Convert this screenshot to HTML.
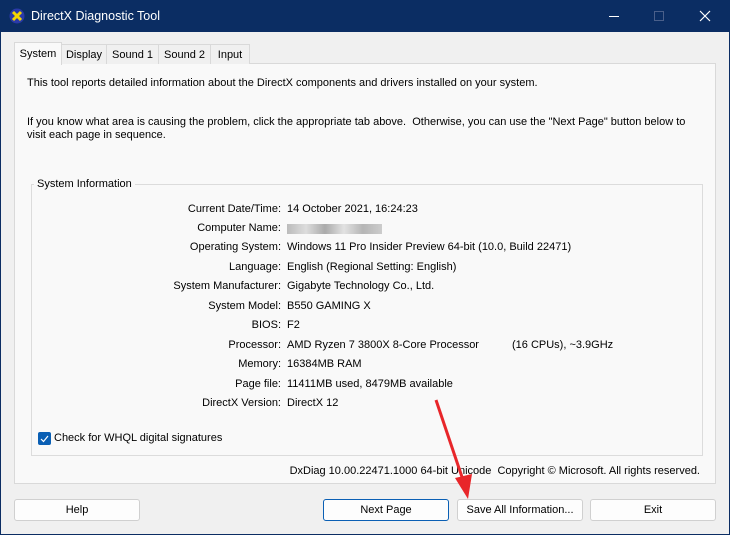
<!DOCTYPE html>
<html><head><style>
*{margin:0;padding:0;box-sizing:border-box}
body{width:730px;height:535px;background:#0b2d63;font-family:"Liberation Sans",sans-serif;font-size:11px;color:#000;position:relative;overflow:hidden}
.win{position:absolute;left:0;top:32px;width:730px;height:503px;background:#f0f0f0;border:1px solid #0b2d63;border-top:none}
.t{position:absolute;white-space:nowrap}
.title{color:#fff;font-size:12.5px;left:31px;top:9px}
.tab{position:absolute;top:44px;height:20px;border:1px solid #d9d9d9;border-bottom:none;background:#f0f0f0;padding:4px 0 0;text-align:center;font-size:11px}
.panel{position:absolute;left:14px;top:63px;width:702px;height:421px;background:#f9f9f9;border:1px solid #d9d9d9}
.grp{position:absolute;left:31px;top:184px;width:672px;height:272px;border:1px solid #dcdcdc}
.lab{position:absolute;right:449px;text-align:right;white-space:nowrap}
.val{position:absolute;left:287px;white-space:nowrap}
.btn{position:absolute;top:499px;height:22px;background:#fdfdfd;border:1px solid #d0d0d0;border-radius:3px;text-align:center;line-height:20px}
</style></head><body>
<svg style="position:absolute;left:9px;top:8px" width="16" height="16"><circle cx="8" cy="8" r="7.5" fill="#2a3aa8"/><path d="M4 4L12 12M12 4L4 12" stroke="#f5d400" stroke-width="3"/></svg>
<div class="t title">DirectX Diagnostic Tool</div>
<div style="position:absolute;left:609px;top:16px;width:10px;height:1px;background:#fff"></div>
<div style="position:absolute;left:654px;top:11px;width:10px;height:10px;border:1px solid #4a5f8a"></div>
<svg style="position:absolute;left:699px;top:10px" width="12" height="12"><path d="M1 1L11 11M11 1L1 11" stroke="#fff" stroke-width="1.2"/></svg>
<div class="win"></div>
<div class="panel"></div>
<div class="tab" style="left:61px;width:46px">Display</div>
<div class="tab" style="left:106px;width:53px">Sound 1</div>
<div class="tab" style="left:158px;width:53px">Sound 2</div>
<div class="tab" style="left:210px;width:40px">Input</div>
<div class="tab" style="left:14px;width:48px;top:42px;height:23px;background:#f9f9f9;padding-top:5px">System</div>
<div class="t" style="left:27px;top:77px">This tool reports detailed information about the DirectX components and drivers installed on your system.</div>
<div class="t" style="left:27px;top:116px">If you know what area is causing the problem, click the appropriate tab above.&nbsp; Otherwise, you can use the "Next Page" button below to</div>
<div class="t" style="left:27px;top:129px">visit each page in sequence.</div>
<div class="grp"></div>
<div class="t" style="left:34px;top:178px;background:#f9f9f9;padding:0 3px">System Information</div>
<div class="lab" style="top:203px">Current Date/Time:</div><div class="val" style="top:203px">14 October 2021, 16:24:23</div>
<div class="lab" style="top:222px">Computer Name:</div><div class="val" style="top:224px;width:95px;height:10px;background:linear-gradient(90deg,#bbb,#ddd 20%,#aaa 40%,#e2e2e2 60%,#b5b5b5 80%,#ccc)"></div>
<div class="lab" style="top:241px">Operating System:</div><div class="val" style="top:241px">Windows 11 Pro Insider Preview 64-bit (10.0, Build 22471)</div>
<div class="lab" style="top:261px">Language:</div><div class="val" style="top:261px">English (Regional Setting: English)</div>
<div class="lab" style="top:280px">System Manufacturer:</div><div class="val" style="top:280px">Gigabyte Technology Co., Ltd.</div>
<div class="lab" style="top:300px">System Model:</div><div class="val" style="top:300px">B550 GAMING X</div>
<div class="lab" style="top:319px">BIOS:</div><div class="val" style="top:319px">F2</div>
<div class="lab" style="top:339px">Processor:</div><div class="val" style="top:339px">AMD Ryzen 7 3800X 8-Core Processor</div><div class="val" style="left:512px;top:339px">(16 CPUs), ~3.9GHz</div>
<div class="lab" style="top:358px">Memory:</div><div class="val" style="top:358px">16384MB RAM</div>
<div class="lab" style="top:378px">Page file:</div><div class="val" style="top:378px">11411MB used, 8479MB available</div>
<div class="lab" style="top:397px">DirectX Version:</div><div class="val" style="top:397px">DirectX 12</div>
<div style="position:absolute;left:38px;top:432px;width:13px;height:13px;background:#0a5fb4;border-radius:2px"></div>
<svg style="position:absolute;left:38px;top:432px" width="13" height="13"><path d="M3 7L5.5 9.5L10 4" stroke="#fff" fill="none" stroke-width="1.2"/></svg>
<div class="t" style="left:54px;top:432px">Check for WHQL digital signatures</div>
<div class="t" style="right:30px;top:465px">DxDiag 10.00.22471.1000 64-bit Unicode&nbsp; Copyright © Microsoft. All rights reserved.</div>
<div class="btn" style="left:14px;width:126px">Help</div>
<div class="btn" style="left:323px;width:126px;border:1px solid #0a5fb4">Next Page</div>
<div class="btn" style="left:457px;width:126px">Save All Information...</div>
<div class="btn" style="left:590px;width:126px">Exit</div>
<svg style="position:absolute;left:0;top:0" width="730" height="535"><line x1="436" y1="400" x2="463" y2="480" stroke="#e8262a" stroke-width="3"/><path d="M455 478L468 499L472 474Z" fill="#e8262a"/></svg>
</body></html>
